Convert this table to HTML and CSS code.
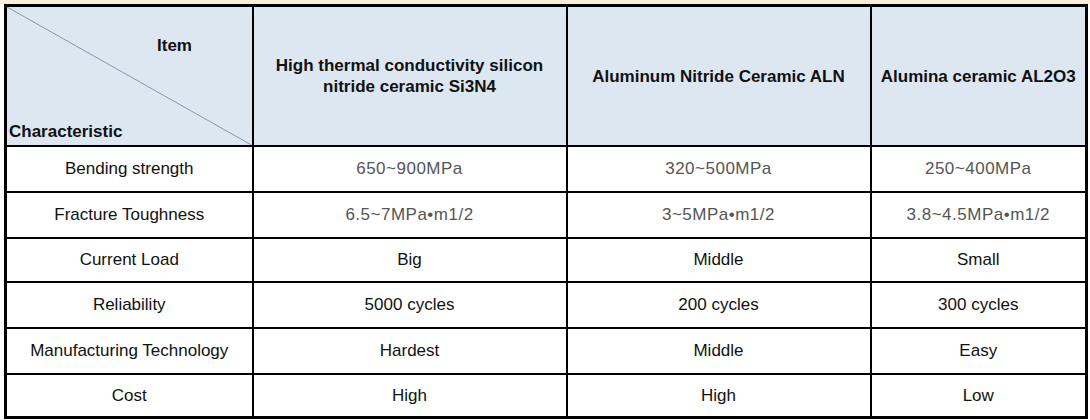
FILE: index.html
```html
<!DOCTYPE html>
<html>
<head>
<meta charset="utf-8">
<link rel="stylesheet" href="styles.css">
</head>
<body>
<div class="strip"></div>
<table class="spec">
  <colgroup>
    <col class="c1"><col class="c2"><col class="c3"><col class="c4">
  </colgroup>
  <thead>
    <tr class="head">
      <th class="corner">
        <svg class="diag" viewBox="0 0 100 100" preserveAspectRatio="none"><line x1="0" y1="0" x2="100" y2="100" stroke="#8597a8" stroke-width="1" vector-effect="non-scaling-stroke"/></svg>
        <span class="item">Item</span>
        <span class="charac">Characteristic</span>
      </th>
      <th>High thermal conductivity silicon nitride ceramic Si3N4</th>
      <th>Aluminum Nitride Ceramic ALN</th>
      <th>Alumina ceramic AL2O3</th>
    </tr>
  </thead>
  <tbody>
    <tr class="grey"><td class="label">Bending strength</td><td>650~900MPa</td><td>320~500MPa</td><td>250~400MPa</td></tr>
    <tr class="grey"><td class="label">Fracture Toughness</td><td>6.5~7MPa•m1/2</td><td>3~5MPa•m1/2</td><td>3.8~4.5MPa•m1/2</td></tr>
    <tr class="short"><td class="label">Current Load</td><td>Big</td><td>Middle</td><td>Small</td></tr>
    <tr><td class="label">Reliability</td><td>5000 cycles</td><td>200 cycles</td><td>300 cycles</td></tr>
    <tr><td class="label">Manufacturing Technology</td><td>Hardest</td><td>Middle</td><td>Easy</td></tr>
    <tr class="last"><td class="label">Cost</td><td>High</td><td>High</td><td>Low</td></tr>
  </tbody>
</table>
</body>
</html>
```
FILE: styles.css
```css
html, body {
  margin: 0;
  padding: 0;
  background: #ffffff;
}
body {
  width: 1090px;
  height: 420px;
  overflow: hidden;
  font-family: "Liberation Sans", Arial, sans-serif;
}
.strip {
  height: 4px;
  background: #fcefd7;
}
.spec {
  margin-left: 4px;
  border-collapse: collapse;
  table-layout: fixed;
  width: 1081px;
  border: 3px solid #000;
}
.c1 { width: 247px; }
.c2 { width: 314px; }
.c3 { width: 304px; }
.c4 { width: 216px; }
.spec th, .spec td {
  border: 2px solid #000;
  text-align: center;
  vertical-align: middle;
  padding: 0 8px;
}
.head th {
  height: 138px;
  background: #dde7f2;
  font-size: 17px;
  font-weight: bold;
  color: #111;
  line-height: 21px;
}
.corner {
  position: relative;
  padding: 0;
}
.diag {
  position: absolute;
  left: 0;
  top: 0;
  width: 100%;
  height: 100%;
}
.item {
  position: absolute;
  left: 150px;
  top: 28px;
}
.charac {
  position: absolute;
  left: 2px;
  bottom: 3px;
}
.spec td {
  height: 44px;
  font-size: 17px;
  color: #111;
}
.spec tr.short td {
  height: 42px;
}
.spec tr.last td {
  height: 41px;
}
.spec tr.grey td {
  color: #555;
  letter-spacing: 0.5px;
}
.spec tr.grey td.label {
  color: #111;
  letter-spacing: 0;
}
```
